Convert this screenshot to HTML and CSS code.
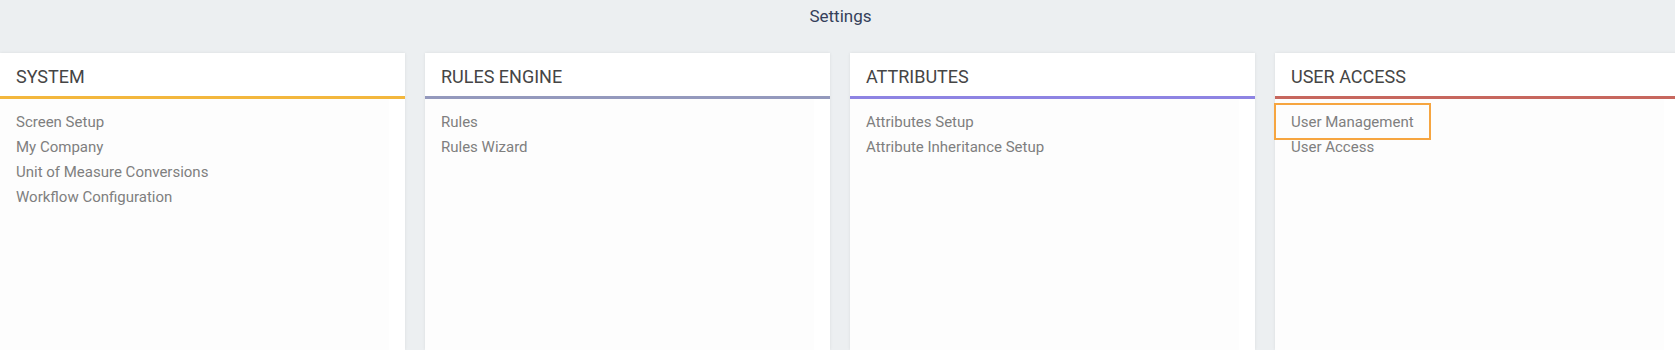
FILE: index.html
```html
<!DOCTYPE html>
<html lang="en">
<head>
  <meta charset="UTF-8" />
  <meta name="viewport" content="width=device-width, initial-scale=1.0"/>
  <title>Settings</title>
  <link rel="stylesheet" href="styles.css">
</head>
<body>
  <div class="page">
    <h1 class="page-title">Settings</h1>

    <div class="panels">
      <div class="panel system">
        <div class="panel-header">SYSTEM</div>
        <div class="panel-body">
          <ul class="panel-list">
            <li>Screen Setup</li>
            <li>My Company</li>
            <li>Unit of Measure Conversions</li>
            <li>Workflow Configuration</li>
          </ul>
        </div>
      </div>

      <div class="panel rules">
        <div class="panel-header">RULES ENGINE</div>
        <div class="panel-body">
          <ul class="panel-list">
            <li>Rules</li>
            <li>Rules Wizard</li>
          </ul>
        </div>
      </div>

      <div class="panel attributes">
        <div class="panel-header">ATTRIBUTES</div>
        <div class="panel-body">
          <ul class="panel-list">
            <li>Attributes Setup</li>
            <li>Attribute Inheritance Setup</li>
          </ul>
        </div>
      </div>

      <div class="panel access">
        <div class="panel-header">USER ACCESS</div>
        <div class="panel-body">
          <ul class="panel-list">
            <li class="highlighted">User Management</li>
            <li>User Access</li>
          </ul>
        </div>
      </div>
    </div>
  </div>
</body>
</html>
```

FILE: styles.css
```css
* {
  margin: 0;
  padding: 0;
  box-sizing: border-box;
}

body {
  font-family: Roboto, 'Liberation Sans', sans-serif;
  background: #eceff1;
  overflow: hidden;
  height: 350px;
}

.page {
  width: 1675px;
  height: 350px;
  overflow: hidden;
}

.page-title {
  font-size: 17px;
  font-weight: 400;
  line-height: 20px;
  color: #34405a;
  text-align: center;
  padding-top: 6px;
  margin-bottom: 27px;
  padding-left: 6px;
}

.panels {
  display: flex;
  gap: 20px;
}

.panel {
  flex: 0 0 405px;
  height: 297px;
  background: #fff;
  box-shadow: 0 0 3px rgba(0, 0, 0, 0.08);
  display: flex;
  flex-direction: column;
}

.panel-header {
  font-size: 18px;
  line-height: 20px;
  color: #454545;
  padding: 14px 16px 9px;
  border-bottom: 3px solid #ccc;
}

.system .panel-header { border-color: #f3b73d; }
.rules .panel-header { border-color: #9499bd; }
.attributes .panel-header { border-color: #8e84e3; }
.access .panel-header { border-color: #c7675e; }

.panel-body {
  flex: 1;
  padding-right: 16px;
}

.panel-list {
  list-style: none;
  height: 100%;
  padding: 11px 16px 0;
  background: #fdfdfd;
}

.panel-list li {
  font-size: 15px;
  line-height: 25px;
  color: #7f7f7f;
  cursor: pointer;
}

.panel-list li.highlighted {
  position: relative;
}

/* annotation box round the selected entry */
.panel-list li.highlighted::after {
  content: '';
  position: absolute;
  left: -17px;
  top: -7px;
  width: 153px;
  height: 33px;
  border: 2px solid #f6a540;
}
```
